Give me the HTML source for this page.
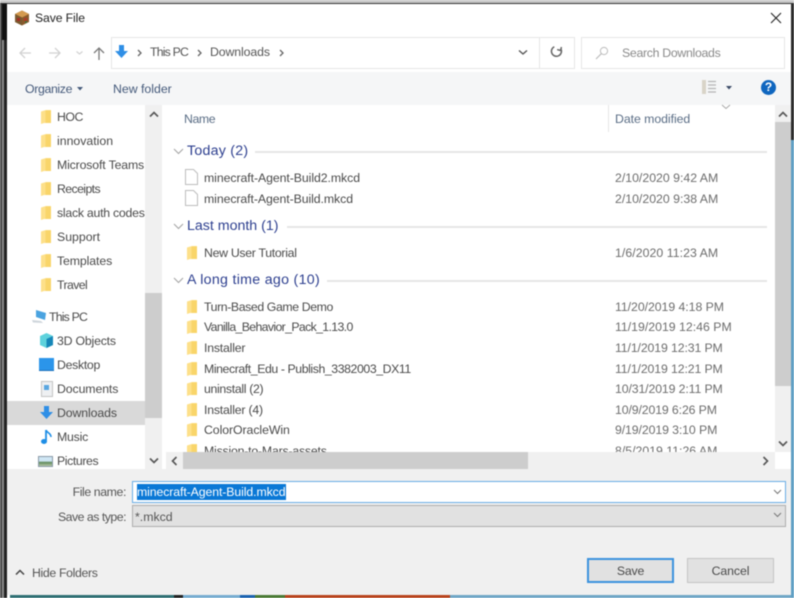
<!DOCTYPE html>
<html><head><meta charset="utf-8"><style>
html,body{margin:0;padding:0;width:794px;height:598px;overflow:hidden;background:#fff}
#r{position:relative;width:794px;height:598px;overflow:hidden;font-family:"Liberation Sans",sans-serif;font-size:12.3px;color:#4a4a4a;filter:blur(.45px)}
.a{position:absolute}
.t{position:absolute;white-space:nowrap;line-height:16px;height:16px}
.n{color:#4a4a4a}
.g{color:#2d3f8f;font-size:14.2px}
.d{color:#6d6d6d}
.l{position:absolute;height:1.5px;background:#e6e6e6}
.tb{color:#44597a}
svg{position:absolute;overflow:visible}
</style></head><body><div id="r">
<!-- background -->
<div class="a" style="left:0;top:0;width:794px;height:3px;background:#c9c9c9"></div>
<div class="a" style="left:0;top:3px;width:794px;height:1px;background:#333"></div>
<div class="a" style="left:0;top:4px;width:2px;height:594px;background:#444"></div>
<div class="a" style="left:2px;top:4px;width:5px;height:36px;background:#111"></div>
<div class="a" style="left:2px;top:40px;width:2px;height:558px;background:#888"></div>
<div class="a" style="left:4px;top:40px;width:3px;height:558px;background:#222"></div>
<div class="a" style="left:791px;top:4px;width:3px;height:136px;background:#2b2b2b"></div>
<div class="a" style="left:791px;top:140px;width:3px;height:458px;background:#5f9fc4"></div>
<div class="a" style="left:10px;top:595px;width:164px;height:3px;background:#2f6f73"></div>
<div class="a" style="left:174px;top:595px;width:9px;height:3px;background:#222"></div>
<div class="a" style="left:183px;top:595px;width:57px;height:3px;background:#76acd0"></div>
<div class="a" style="left:240px;top:595px;width:15px;height:3px;background:#1a62b0"></div>
<div class="a" style="left:255px;top:595px;width:30px;height:3px;background:#4a7a34"></div>
<div class="a" style="left:285px;top:595px;width:165px;height:3px;background:#b8431c"></div>
<div class="a" style="left:450px;top:595px;width:341px;height:3px;background:#6fa6c6"></div>
<!-- dialog -->
<div class="a" style="left:7px;top:4px;width:784px;height:591px;background:#fff"></div>
<div class="a" style="left:7px;top:72px;width:784px;height:33px;background:#f5f6f7"></div>
<div class="a" style="left:7px;top:469px;width:784px;height:126px;background:#f0f0f0"></div>
<!-- title icon -->
<svg style="left:14px;top:10px" width="16" height="16" viewBox="0 0 16 16">
<path d="M8 .5L15 4v8l-7 3.500L1 12V4z" fill="#8a5a2b"/>
<path d="M8 .5L15 4 8 7.500 1 4z" fill="#d49a4e"/>
<path d="M1 4l7 3.500v8L1 12z" fill="#7a5a30"/>
<rect x="3" y="8" width="3" height="3" fill="#a52c22"/>
<rect x="10" y="8" width="3" height="3" fill="#b03a28"/>
<rect x="11" y="11" width="2" height="2" fill="#3f6d3a"/>
</svg>
<div class="t" style="left:35px;top:10px;color:#222;font-size:12.2px;letter-spacing:-.1px">Save File</div>
<svg style="left:770px;top:12px" width="12" height="12" viewBox="0 0 12 12"><path d="M1 1l10 10M11 1L1 11" stroke="#222" stroke-width="1.100" fill="none"/></svg>
<!-- nav -->
<svg style="left:18px;top:46px" width="14" height="14" viewBox="0 0 14 14"><path d="M13 7H2M7 2L2 7l5 5" stroke="#d2d2d2" stroke-width="1.300" fill="none"/></svg>
<svg style="left:48px;top:46px" width="14" height="14" viewBox="0 0 14 14"><path d="M1 7h11M7 2l5 5-5 5" stroke="#d2d2d2" stroke-width="1.300" fill="none"/></svg>
<svg style="left:75px;top:50px" width="9" height="6" viewBox="0 0 9 6"><path d="M1.500 1.500L4.500 4l3-2.500" stroke="#d2d2d2" stroke-width="1.200" fill="none"/></svg>
<svg style="left:92px;top:46px" width="14" height="14" viewBox="0 0 14 14"><path d="M7 14V2M2 7l5-5 5 5" stroke="#7a7a7a" stroke-width="1.300" fill="none"/></svg>
<div class="a" style="left:111px;top:37px;width:462px;height:30px;border:1px solid #e6e6e6"></div>
<div class="a" style="left:539px;top:37px;width:1px;height:31px;background:#e6e6e6"></div>
<svg style="left:115px;top:45px" width="13" height="14" viewBox="0 0 13 14"><path d="M4 0h5v6h4l-6.500 7L0 6h4z" fill="#2f8fe6"/></svg>
<svg style="left:137px;top:49px" width="6" height="8" viewBox="0 0 6 8"><path d="M1 1l3 3-3 3" stroke="#666" stroke-width="1.300" fill="none"/></svg>
<div class="t" style="left:150px;top:44px;color:#555;letter-spacing:-.8px">This PC</div>
<svg style="left:197px;top:49px" width="6" height="8" viewBox="0 0 6 8"><path d="M1 1l3 3-3 3" stroke="#666" stroke-width="1.300" fill="none"/></svg>
<div class="t" style="left:210px;top:44px;color:#555;letter-spacing:-.1px">Downloads</div>
<svg style="left:279px;top:49px" width="6" height="8" viewBox="0 0 6 8"><path d="M1 1l3 3-3 3" stroke="#666" stroke-width="1.300" fill="none"/></svg>
<svg style="left:518px;top:49px" width="10" height="7" viewBox="0 0 10 7"><path d="M1 1.500l4 3.500 4-3.500" stroke="#555" stroke-width="1.400" fill="none"/></svg>
<svg style="left:550px;top:45px" width="13" height="14" viewBox="0 0 13 14"><path d="M3 2.500A5 5 0 1 0 10 3M10 1v3.500H6.500" stroke="#666" stroke-width="1.500" fill="none" transform="rotate(15 6.500 7)"/></svg>
<div class="a" style="left:581px;top:37px;width:202px;height:30px;border:1px solid #e6e6e6"></div>
<svg style="left:595px;top:46px" width="14" height="14" viewBox="0 0 14 14"><circle cx="9" cy="5" r="3.600" stroke="#bdbdbd" fill="none"/><path d="M6.300 7.700L1 13" stroke="#bdbdbd" stroke-width="1.200"/></svg>
<div class="t" style="left:622px;top:45px;color:#8a8a8a;letter-spacing:-.3px">Search Downloads</div>
<!-- toolbar -->
<div class="t tb" style="left:25px;top:81px;letter-spacing:-.35px">Organize</div>
<svg style="left:77px;top:87px" width="6" height="4" viewBox="0 0 6 4"><path d="M0 0h6L3 3.500z" fill="#44597a"/></svg>
<div class="t tb" style="left:113px;top:81px">New folder</div>
<svg style="left:702px;top:80px" width="15" height="15" viewBox="0 0 15 15"><rect x="0" y="0" width="4" height="14" fill="#d9d4c8"/><path d="M6 1.500h8M6 5h8M6 8.500h8M6 12h8" stroke="#b5b5b5" stroke-width="1.200"/></svg>
<svg style="left:726px;top:86px" width="6" height="4" viewBox="0 0 6 4"><path d="M0 0h6L3 3.500z" fill="#3a4a66"/></svg>
<div class="a" style="left:761px;top:80px;width:15px;height:15px;border-radius:50%;background:#0f66bf;color:#fff;font-weight:bold;font-size:12px;line-height:15px;text-align:center">?</div>
<!-- sidebar -->
<svg width="0" height="0" style="position:absolute"><defs>
<symbol id="f" viewBox="0 0 10 14"><path d="M0 1.500L5 0h5v13H3L0 14z" fill="#fde08a"/><path d="M4.500 0.500h5.500v12.500h-5.500z" fill="#f9d56a"/></symbol>
</defs></svg>
<svg style="left:41px;top:110px" width="10" height="14"><use href="#f"/></svg><div class="t" style="left:57px;top:109px;letter-spacing:-.5px">HOC</div>
<svg style="left:41px;top:134px" width="10" height="14"><use href="#f"/></svg><div class="t" style="left:57px;top:133px">innovation</div>
<svg style="left:41px;top:158px" width="10" height="14"><use href="#f"/></svg><div class="t" style="left:57px;top:157px;letter-spacing:-.15px">Microsoft Teams</div>
<svg style="left:41px;top:182px" width="10" height="14"><use href="#f"/></svg><div class="t" style="left:57px;top:181px;letter-spacing:-.6px">Receipts</div>
<svg style="left:41px;top:206px" width="10" height="14"><use href="#f"/></svg><div class="t" style="left:57px;top:205px;letter-spacing:-.25px">slack auth codes</div>
<svg style="left:41px;top:230px" width="10" height="14"><use href="#f"/></svg><div class="t" style="left:57px;top:229px">Support</div>
<svg style="left:41px;top:254px" width="10" height="14"><use href="#f"/></svg><div class="t" style="left:57px;top:253px;letter-spacing:-.1px">Templates</div>
<svg style="left:41px;top:278px" width="10" height="14"><use href="#f"/></svg><div class="t" style="left:57px;top:277px;letter-spacing:-.6px">Travel</div>
<svg style="left:31px;top:309px" width="16" height="15" viewBox="0 0 16 15"><path d="M5 1l10 3-1 7-9-3z" fill="#4aa3e0"/><path d="M1 11l9 1 2 2-10-.5z" fill="#cfd6dc"/></svg>
<div class="t" style="left:49px;top:309px;letter-spacing:-.8px">This PC</div>
<svg style="left:39px;top:333px" width="15" height="15" viewBox="0 0 15 15"><path d="M7.500 0L14 3v9l-6.500 3L1 12V3z" fill="#5ed2dc"/><path d="M7.500 6L14 3v9l-6.500 3z" fill="#1687b8"/></svg>
<div class="t" style="left:57px;top:333px;letter-spacing:-.2px">3D Objects</div>
<div class="a" style="left:39px;top:358px;width:15px;height:12px;background:#2b95ea;border-bottom:1px solid #1a6fb8"></div>
<div class="t" style="left:57px;top:357px;letter-spacing:-.3px">Desktop</div>
<div class="a" style="left:41px;top:381px;width:10px;height:14px;background:#eef0f2;border:1px solid #c4c4c4"></div>
<div class="a" style="left:44px;top:385px;width:5px;height:5px;background:#5aa6e0"></div>
<div class="t" style="left:57px;top:381px;letter-spacing:-.1px">Documents</div>
<div class="a" style="left:7px;top:401px;width:138px;height:24px;background:#d9d9d9"></div>
<svg style="left:40px;top:406px" width="13" height="14" viewBox="0 0 13 14"><path d="M4 0h5v6h4l-6.500 7L0 6h4z" fill="#2f8fe6"/></svg>
<div class="t" style="left:57px;top:405px;letter-spacing:-.1px">Downloads</div>
<svg style="left:41px;top:429px" width="12" height="16" viewBox="0 0 12 16"><path d="M5 1v11" stroke="#1e8ee6" stroke-width="1.800"/><ellipse cx="3" cy="12.500" rx="3" ry="2.500" fill="#1e8ee6"/><path d="M5 1c1 3 5 3 5 7" stroke="#1e8ee6" stroke-width="1.600" fill="none"/></svg>
<div class="t" style="left:57px;top:429px;letter-spacing:-.2px">Music</div>
<div class="a" style="left:38px;top:456px;width:15px;height:11px;background:linear-gradient(#cfe6f4 45%,#5d8a5a 60%,#b7c8a8);border:1px solid #8a9aa8;box-sizing:border-box"></div>
<div class="t" style="left:57px;top:453px;letter-spacing:-.4px">Pictures</div>
<!-- sidebar scrollbar -->
<div class="a" style="left:145px;top:105px;width:17px;height:364px;background:#f0f0f0"></div>
<div class="a" style="left:145px;top:293px;width:17px;height:125px;background:#cdcdcd"></div>
<svg style="left:149px;top:111px" width="10" height="7" viewBox="0 0 10 7"><path d="M1 5.500l4-4 4 4" stroke="#555" stroke-width="1.600" fill="none"/></svg>
<svg style="left:149px;top:457px" width="10" height="7" viewBox="0 0 10 7"><path d="M1 1.500l4 4 4-4" stroke="#555" stroke-width="1.600" fill="none"/></svg>
<!-- list header -->
<div class="t" style="left:184px;top:111px;color:#5a6d85;letter-spacing:-.4px">Name</div>
<div class="a" style="left:608px;top:105px;width:1px;height:27px;background:#e6e6e6"></div>
<div class="t" style="left:615px;top:111px;color:#5a6d85;letter-spacing:-.05px">Date modified</div>
<svg style="left:721px;top:104px" width="10" height="6" viewBox="0 0 10 6"><path d="M1 1l4 3.500L9 1" stroke="#a8a8a8" fill="none"/></svg>
<!-- groups -->
<svg style="left:173px;top:148px" width="11" height="7" viewBox="0 0 11 7"><path d="M1 1l4.500 4.500L10 1" stroke="#a5a5a5" stroke-width="1.100" fill="none"/></svg>
<div class="t g" style="left:187px;top:143px;letter-spacing:.25px">Today (2)</div>
<div class="l" style="left:255px;top:151px;width:512px"></div>
<svg style="left:185px;top:169px" width="13" height="16" viewBox="0 0 13 16"><path d="M.5.500h8l4 4v11H.500z" fill="#fff" stroke="#bdbdbd"/></svg>
<div class="t n" style="left:204px;top:170px;letter-spacing:-.07px">minecraft-Agent-Build2.mkcd</div><div class="t d" style="left:615px;top:170px">2/10/2020 9:42 AM</div>
<svg style="left:185px;top:190px" width="13" height="16" viewBox="0 0 13 16"><path d="M.5.500h8l4 4v11H.500z" fill="#fff" stroke="#bdbdbd"/></svg>
<div class="t n" style="left:204px;top:191px;letter-spacing:-.08px">minecraft-Agent-Build.mkcd</div><div class="t d" style="left:615px;top:191px">2/10/2020 9:38 AM</div>
<svg style="left:173px;top:223px" width="11" height="7" viewBox="0 0 11 7"><path d="M1 1l4.500 4.500L10 1" stroke="#a5a5a5" stroke-width="1.100" fill="none"/></svg>
<div class="t g" style="left:187px;top:218px">Last month (1)</div>
<div class="l" style="left:287px;top:226px;width:480px"></div>
<svg style="left:187px;top:246px" width="10" height="14"><use href="#f"/></svg>
<div class="t n" style="left:204px;top:245px;letter-spacing:-.3px">New User Tutorial</div><div class="t d" style="left:615px;top:245px;letter-spacing:.05px">1/6/2020 11:23 AM</div>
<svg style="left:173px;top:277px" width="11" height="7" viewBox="0 0 11 7"><path d="M1 1l4.500 4.500L10 1" stroke="#a5a5a5" stroke-width="1.100" fill="none"/></svg>
<div class="t g" style="left:187px;top:272px;letter-spacing:.3px">A long time ago (10)</div>
<div class="l" style="left:327px;top:280px;width:440px"></div>
<svg style="left:187px;top:300px" width="10" height="14"><use href="#f"/></svg>
<div class="t n" style="left:204px;top:299px;letter-spacing:-.4px">Turn-Based Game Demo</div><div class="t d" style="left:615px;top:299px;letter-spacing:-.05px">11/20/2019 4:18 PM</div>
<svg style="left:187px;top:320px" width="10" height="14"><use href="#f"/></svg>
<div class="t n" style="left:204px;top:319px;letter-spacing:-.64px">Vanilla_Behavior_Pack_1.13.0</div><div class="t d" style="left:615px;top:319px">11/19/2019 12:46 PM</div>
<svg style="left:187px;top:341px" width="10" height="14"><use href="#f"/></svg>
<div class="t n" style="left:204px;top:340px;letter-spacing:-.2px">Installer</div><div class="t d" style="left:615px;top:340px;letter-spacing:-.12px">11/1/2019 12:31 PM</div>
<svg style="left:187px;top:362px" width="10" height="14"><use href="#f"/></svg>
<div class="t n" style="left:204px;top:361px;letter-spacing:-.42px">Minecraft_Edu - Publish_3382003_DX11</div><div class="t d" style="left:615px;top:361px;letter-spacing:-.12px">11/1/2019 12:21 PM</div>
<svg style="left:187px;top:382px" width="10" height="14"><use href="#f"/></svg>
<div class="t n" style="left:204px;top:381px;letter-spacing:-.33px">uninstall (2)</div><div class="t d" style="left:615px;top:381px;letter-spacing:-.12px">10/31/2019 2:11 PM</div>
<svg style="left:187px;top:403px" width="10" height="14"><use href="#f"/></svg>
<div class="t n" style="left:204px;top:402px;letter-spacing:-.2px">Installer (4)</div><div class="t d" style="left:615px;top:402px;letter-spacing:-.12px">10/9/2019 6:26 PM</div>
<svg style="left:187px;top:423px" width="10" height="14"><use href="#f"/></svg>
<div class="t n" style="left:204px;top:422px;letter-spacing:-.07px">ColorOracleWin</div><div class="t d" style="left:615px;top:422px;letter-spacing:-.1px">9/19/2019 3:10 PM</div>
<svg style="left:187px;top:444px" width="10" height="14"><use href="#f"/></svg>
<div class="t n" style="left:204px;top:443px;letter-spacing:-.2px">Mission-to-Mars-assets</div><div class="t d" style="left:615px;top:443px">8/5/2019 11:26 AM</div>
<!-- list scrollbars -->
<div class="a" style="left:775px;top:105px;width:16px;height:347px;background:#f0f0f0"></div>
<div class="a" style="left:775px;top:122px;width:16px;height:264px;background:#cdcdcd"></div>
<svg style="left:778px;top:111px" width="10" height="7" viewBox="0 0 10 7"><path d="M1 5.500l4-4 4 4" stroke="#555" stroke-width="1.600" fill="none"/></svg>
<svg style="left:778px;top:440px" width="10" height="7" viewBox="0 0 10 7"><path d="M1 1.500l4 4 4-4" stroke="#555" stroke-width="1.600" fill="none"/></svg>
<div class="a" style="left:162px;top:452px;width:613px;height:17px;background:#f0f0f0"></div>
<div class="a" style="left:162px;top:452px;width:4px;height:17px;background:#fff"></div>
<div class="a" style="left:183px;top:452px;width:345px;height:17px;background:#cdcdcd"></div>
<svg style="left:171px;top:456px" width="7" height="10" viewBox="0 0 7 10"><path d="M5.500 1l-4 4 4 4" stroke="#555" stroke-width="1.600" fill="none"/></svg>
<svg style="left:762px;top:456px" width="7" height="10" viewBox="0 0 7 10"><path d="M1.500 1l4 4-4 4" stroke="#555" stroke-width="1.600" fill="none"/></svg>
<!-- form -->
<div class="t" style="left:26px;width:100px;text-align:right;top:484px;color:#555;letter-spacing:-.4px">File name:</div>
<div class="a" style="left:132px;top:481px;width:652px;height:20px;background:#fff;border:1px solid #69aee6"></div>
<div class="a" style="left:137px;top:484px;width:149px;height:16px;background:#0a78d6"></div>
<div class="t" style="left:137px;top:484px;color:#fff;letter-spacing:-.1px">minecraft-Agent-Build.mkcd</div>
<svg style="left:773px;top:489px" width="9" height="6" viewBox="0 0 9 6"><path d="M1 1l3.500 3.500L8 1" stroke="#777" fill="none"/></svg>
<div class="t" style="left:26px;width:100px;text-align:right;top:509px;color:#555;letter-spacing:-.5px">Save as type:</div>
<div class="a" style="left:132px;top:505px;width:652px;height:20px;background:#e1e1e1;border:1px solid #adadad"></div>
<div class="t" style="left:135px;top:509px;color:#555">*.mkcd</div>
<svg style="left:773px;top:512px" width="9" height="6" viewBox="0 0 9 6"><path d="M1 1l3.500 3.500L8 1" stroke="#777" fill="none"/></svg>
<svg style="left:15px;top:569px" width="10" height="7" viewBox="0 0 10 7"><path d="M1 5.500l4-4 4 4" stroke="#444" stroke-width="1.500" fill="none"/></svg>
<div class="t" style="left:32px;top:565px;color:#555;letter-spacing:-.35px">Hide Folders</div>
<div class="a" style="left:587px;top:558px;width:83px;height:21px;background:#e1e1e1;border:2px solid #3c93de;text-align:center;line-height:23px;letter-spacing:-.2px">Save</div>
<div class="a" style="left:687px;top:558px;width:85px;height:23px;background:#e1e1e1;border:1px solid #c4c4c4;text-align:center;line-height:25px;letter-spacing:-.1px">Cancel</div>
</div></body></html>
